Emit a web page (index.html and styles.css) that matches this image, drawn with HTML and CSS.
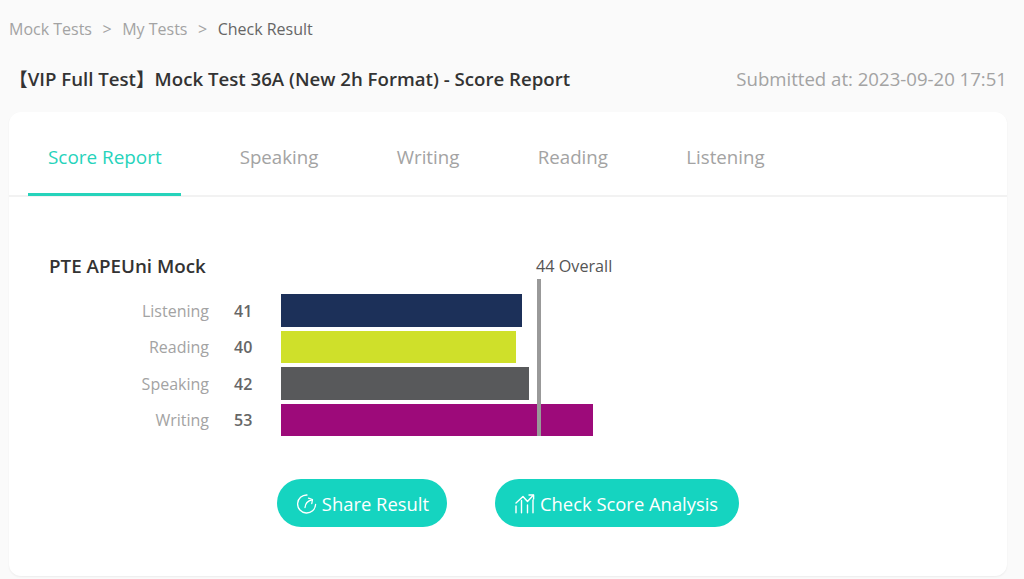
FILE: index.html
```html
<!DOCTYPE html>
<html lang="en">
<head>
  <meta charset="UTF-8" />
  <meta name="viewport" content="width=device-width,initial-scale=1" />
  <title>Score Report</title>
  <link rel="stylesheet" href="styles.css">
</head>
<body>

  <div class="crumbs">
    <span>Mock Tests</span><span class="sep">&gt;</span>
    <span>My Tests</span><span class="sep">&gt;</span>
    <span class="current">Check Result</span>
  </div>

  <div class="head">
    <h1>【VIP Full Test】Mock Test 36A (New 2h Format) - Score Report</h1>
    <span class="submitted">Submitted at: 2023-09-20 17:51</span>
  </div>

  <div class="card">

    <!-- TABS -->
    <div class="tabs">
      <div class="tab active">Score Report</div>
      <div class="tab">Speaking</div>
      <div class="tab">Writing</div>
      <div class="tab">Reading</div>
      <div class="tab">Listening</div>
    </div>

    <!-- CHART -->
    <div class="chart">
      <div class="chart-head">
        <h2>PTE APEUni Mock</h2>
      </div>
      <div class="rows">
        <div class="overall"><span>44 Overall</span></div>
        <div class="row">
          <span class="label">Listening</span><span class="score">41</span>
          <div class="bar navy" style="width:241px"></div>
        </div>
        <div class="row">
          <span class="label">Reading</span><span class="score">40</span>
          <div class="bar lime" style="width:235px"></div>
        </div>
        <div class="row">
          <span class="label">Speaking</span><span class="score">42</span>
          <div class="bar grey" style="width:248px"></div>
        </div>
        <div class="row">
          <span class="label">Writing</span><span class="score">53</span>
          <div class="bar purple" style="width:312px"></div>
        </div>
      </div>
    </div>

    <!-- ACTIONS -->
    <div class="actions">
      <button class="btn btn-share">
        <svg width="20" height="20" viewBox="0 0 20 20" fill="none" stroke="#fff" stroke-width="1.3" stroke-linecap="round" stroke-linejoin="round">
          <path d="M10 1A9 9 0 1 0 18.6 10.5"/>
          <path d="M8 13.5C8.3 9.5 10.5 6.8 15 5.8"/>
          <path d="M11.5 4.2L15.5 5.5L14.8 9.5"/>
        </svg>
        Share Result
      </button>
      <button class="btn btn-analysis">
        <svg width="20" height="20" viewBox="0 0 20 20" fill="none" stroke="#fff" stroke-width="1.4" stroke-linecap="round" stroke-linejoin="round">
          <path d="M1 12V18.7M6.5 6.5V18.7M12.5 11V18.7M18 6V18.7"/>
          <path d="M1 9L8 2.5L12.5 7.5L18.2 1.2"/>
          <path d="M14 1H18.6V5"/>
        </svg>
        Check Score Analysis
      </button>
    </div>

  </div>

</body>
</html>
```

FILE: styles.css
```css
html, body { margin: 0; height: 579px; overflow: hidden; }
body { background: #fafafa; font-family: "Open Sans", "Noto Sans CJK SC", sans-serif; color: #333; }

.crumbs { display: flex; gap: 10.5px; padding: 18px 0 0 9px; height: 22px; line-height: 22px; font-size: 16px; color: #a3a3a3; }
.crumbs .current { color: #666; }

.head { display: flex; justify-content: space-between; align-items: center; height: 30px; margin-top: 23px; padding: 0 17px 0 9px; }
.head h1 { margin: -2px 0 0; font-size: 18.65px; font-weight: 600; color: #333; }
.submitted { font-size: 18.6px; color: #a3a3a3; }

.card { margin: 19px 17px 0 9px; height: 464px; background: #fff; border-radius: 12px; box-shadow: 0 1px 2px rgba(0,0,0,.06); }

.tabs { display: flex; height: 83px; padding-left: 19px; border-bottom: 2px solid #f2f2f2; }
.tab { padding: 0 20px; margin-right: 38.4px; height: 84px; box-sizing: border-box; line-height: 89px; font-size: 18.7px; color: #a3a3a3; }
.tab.active { padding-right: 19px; margin-right: 39px; color: #26d3bb; border-bottom: 3px solid #26d3bb; font-size: 18.9px; font-weight: 500; line-height: 90px; }

.chart { padding: 56.5px 0 0 40px; }
.chart-head { height: 31.5px; }
.chart h2 { margin: 0; line-height: 24px; font-size: 18.8px; font-weight: 600; color: #333; }

.rows { position: relative; margin-top: 9px; display: flex; flex-direction: column; gap: 4px; }
.row { display: flex; align-items: center; height: 32.6px; }
.label { width: 160px; padding-top: .8px; text-align: right; font-size: 16px; color: #a3a3a3; }
.score { width: 72px; padding: .8px 0 0 25px; box-sizing: border-box; font-size: 16px; font-weight: 600; color: #666; }
.bar { height: 100%; }
.navy { background: #1c3059; }
.lime { background: #cfe02a; }
.grey { background: #58595b; }
.purple { background: #9d0a7a; }

.overall { position: absolute; top: -15px; bottom: 0; left: 488px; width: 4px; background: #999; }
.overall span { position: absolute; left: -1px; bottom: 100%; margin-bottom: 2px; white-space: nowrap; font-size: 16.2px; color: #555; }

.actions { display: flex; justify-content: center; gap: 48px; margin-top: 43px; }
.btn { display: flex; align-items: center; gap: 5px; height: 48px; padding: 1px 20px 0; border: 0; border-radius: 24px; background: #15d4c0; color: #fff; font-family: inherit; font-size: 18.4px; }
.btn-share { padding-right: 18px; }
.btn-analysis { padding-right: 21px; }
```
